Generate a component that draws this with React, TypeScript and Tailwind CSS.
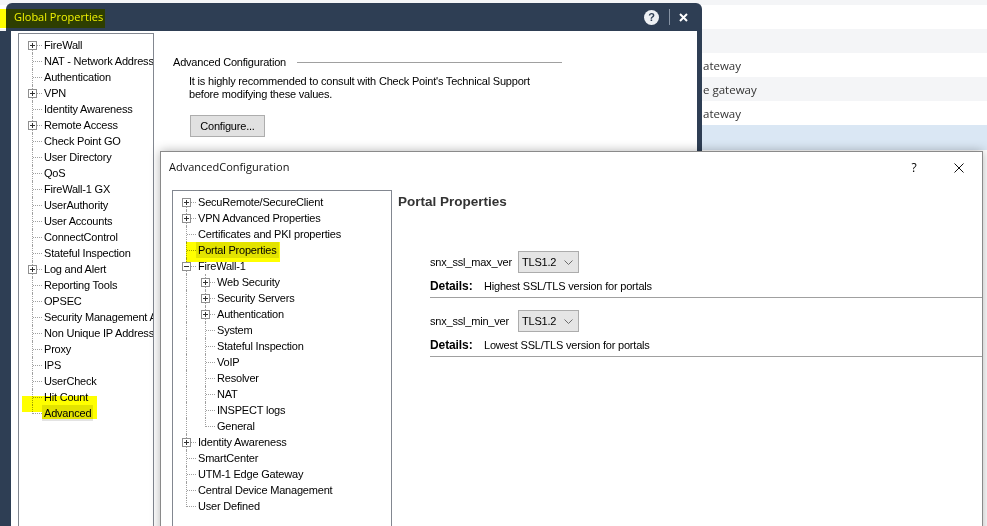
import React from "react";

type Row = {
  label: string;
  level: number;
  exp?: "plus" | "minus";
  first?: boolean;
  last?: boolean;
  selected?: boolean;
};

const globalTree: Row[] = [
  { label: "FireWall", level: 0, exp: "plus", first: true },
  { label: "NAT - Network Address Translation", level: 0 },
  { label: "Authentication", level: 0 },
  { label: "VPN", level: 0, exp: "plus" },
  { label: "Identity Awareness", level: 0 },
  { label: "Remote Access", level: 0, exp: "plus" },
  { label: "Check Point GO", level: 0 },
  { label: "User Directory", level: 0 },
  { label: "QoS", level: 0 },
  { label: "FireWall-1 GX", level: 0 },
  { label: "UserAuthority", level: 0 },
  { label: "User Accounts", level: 0 },
  { label: "ConnectControl", level: 0 },
  { label: "Stateful Inspection", level: 0 },
  { label: "Log and Alert", level: 0, exp: "plus" },
  { label: "Reporting Tools", level: 0 },
  { label: "OPSEC", level: 0 },
  { label: "Security Management Access", level: 0 },
  { label: "Non Unique IP Address Ranges", level: 0 },
  { label: "Proxy", level: 0 },
  { label: "IPS", level: 0 },
  { label: "UserCheck", level: 0 },
  { label: "Hit Count", level: 0 },
  { label: "Advanced", level: 0, last: true, selected: true },
];

const advTree: Row[] = [
  { label: "SecuRemote/SecureClient", level: 0, exp: "plus", first: true },
  { label: "VPN Advanced Properties", level: 0, exp: "plus" },
  { label: "Certificates and PKI properties", level: 0 },
  { label: "Portal Properties", level: 0, selected: true },
  { label: "FireWall-1", level: 0, exp: "minus" },
  { label: "Web Security", level: 1, exp: "plus" },
  { label: "Security Servers", level: 1, exp: "plus" },
  { label: "Authentication", level: 1, exp: "plus" },
  { label: "System", level: 1 },
  { label: "Stateful Inspection", level: 1 },
  { label: "VoIP", level: 1 },
  { label: "Resolver", level: 1 },
  { label: "NAT", level: 1 },
  { label: "INSPECT logs", level: 1 },
  { label: "General", level: 1, last: true },
  { label: "Identity Awareness", level: 0, exp: "plus" },
  { label: "SmartCenter", level: 0 },
  { label: "UTM-1 Edge Gateway", level: 0 },
  { label: "Central Device Management", level: 0 },
  { label: "User Defined", level: 0, last: true },
];

function Expander({ kind }: { kind: "plus" | "minus" }) {
  return (
    <svg
      className="absolute left-[9px] top-[4px]"
      width="9"
      height="9"
      viewBox="0 0 9 9"
      shapeRendering="crispEdges"
    >
      <rect x="0.5" y="0.5" width="8" height="8" fill="#fff" stroke="#8f8f8f" />
      <path d="M2 4.5h5" stroke="#333" />
      {kind === "plus" && <path d="M4.5 2v5" stroke="#333" />}
    </svg>
  );
}

function TreeRow({ row }: { row: Row }) {
  return (
    <div className="flex h-[16px] items-center overflow-hidden">
      {row.level === 1 && (
        <span className="relative h-full w-[19px] shrink-0">
          <span className="absolute left-[13px] top-0 bottom-0 border-l border-dotted border-[#a0a0a0]" />
        </span>
      )}
      <span className="relative h-full w-[23px] shrink-0">
        <span
          className={`absolute left-[13px] border-l border-dotted border-[#a0a0a0] ${
            row.first ? "top-[8px]" : "top-0"
          } ${row.last ? "h-[9px]" : "bottom-0"}`}
        />
        <span className="absolute left-[14px] right-0 top-[8px] border-t border-dotted border-[#a0a0a0]" />
        {row.exp && <Expander kind={row.exp} />}
      </span>
      <span
        className={`h-[16px] min-w-0 overflow-hidden whitespace-nowrap px-[2px] leading-[16px] ${
          row.selected ? "bg-[#e3e3e3]" : ""
        }`}
      >
        {row.label}
      </span>
    </div>
  );
}

function Select() {
  return (
    <div className="flex h-[22px] w-[61px] items-center justify-between border border-[#acacac] bg-[#e5e5e5] pl-[3px] pr-[5px]">
      <span>TLS1.2</span>
      <svg width="9" height="5" viewBox="0 0 9 5">
        <path d="M0.5 0.5l4 4 4-4" fill="none" stroke="#6b6b6b" />
      </svg>
    </div>
  );
}

function PropRow({ name, details }: { name: string; details: string }) {
  return (
    <>
      <div className="flex h-[22px] items-center">
        <span className="w-[88px]">{name}</span>
        <Select />
      </div>
      <div className="mt-[6px] flex h-[14px] items-center leading-[14px]">
        <span className="w-[54px] text-[12px] font-bold tracking-[-0.1px]">Details:</span>
        <span>{details}</span>
      </div>
      <div className="mt-[4px] h-px bg-[#a0a0a0]" />
    </>
  );
}

export default function App() {
  return (
    <div className="relative h-[526px] w-[987px] overflow-hidden bg-white font-['Liberation_Sans',Arial,sans-serif] text-[11px] tracking-[-0.2px] text-black">
      {/* background application list */}
      <div className="flex flex-col font-['Open_Sans',sans-serif] text-[11.5px] tracking-normal text-[#333]">
        <div className="h-[5px] bg-[#f4f5f7]" />
        <div className="h-[24px] bg-white" />
        <div className="h-[24px] bg-[#f4f5f7]" />
        <div className="flex h-[24px] items-center bg-white pl-[703px] pt-[2px]">ateway</div>
        <div className="flex h-[24px] items-center bg-[#f4f5f7] pl-[703px] pt-[2px]">e gateway</div>
        <div className="flex h-[24px] items-center bg-white pl-[703px] pt-[2px]">ateway</div>
        <div className="h-[25px] bg-[#dae7f4]" />
      </div>

      {/* Global Properties window */}
      <div className="absolute left-0 top-[3px] flex h-[523px] w-[702px] flex-col">
        <div className="ml-[6px] flex h-[28px] shrink-0 items-center rounded-t-[6px] bg-[#2e3e54] pl-[8px] pr-[14px]">
          <span className="font-['Open_Sans',sans-serif] text-[11px] tracking-normal text-[#f2f4f7]">
            Global Properties
          </span>
          <span className="ml-auto flex h-[15px] w-[15px] items-center justify-center rounded-full bg-[#eef1f5] text-[11px] font-bold tracking-normal text-[#2e3e54]">
            ?
          </span>
          <span className="ml-[10px] h-[16px] w-px bg-[#8592a3]" />
          <svg className="ml-[9px]" width="9" height="9" viewBox="0 0 9 9">
            <path d="M1 1l7 7M8 1l-7 7" stroke="#fff" strokeWidth="2" />
          </svg>
        </div>
        <div className="flex min-h-0 flex-1 bg-[#2e3e54] pl-[11px] pr-[5px]">
          <div className="flex flex-1 items-start bg-white">
            <div className="ml-[7px] mt-[2px] h-[520px] w-[136px] shrink-0 overflow-hidden border border-[#828790] pt-[3px]">
              {globalTree.map((r) => (
                <TreeRow key={r.label} row={r} />
              ))}
            </div>
            <div className="ml-[19px] mt-[24px] w-[389px]">
              <div className="flex h-[14px] items-center">
                <span>Advanced Configuration</span>
                <span className="ml-[11px] h-px flex-1 bg-[#a0a0a0]" />
              </div>
              <p className="ml-[16px] mt-[6px] leading-[13px]">
                It is highly recommended to consult with Check Point's Technical Support
                <br />
                before modifying these values.
              </p>
              <button
                type="button"
                className="ml-[17px] mt-[14px] h-[22px] w-[75px] border border-[#adadad] bg-[#e1e1e1]"
              >
                Configure...
              </button>
            </div>
          </div>
        </div>
      </div>

      {/* AdvancedConfiguration window */}
      <div className="absolute left-[160px] top-[151px] flex h-[400px] w-[823px] flex-col border border-[#8a8a8a] bg-white shadow-[0_0_10px_rgba(0,0,0,0.3)]">
        <div className="flex h-[31px] shrink-0 items-center pl-[8px]">
          <span className="font-['Open_Sans',sans-serif] text-[11px] tracking-normal text-[#111]">
            AdvancedConfiguration
          </span>
          <span className="ml-auto w-[12px] text-center font-['Open_Sans',sans-serif] text-[12px] tracking-normal">
            ?
          </span>
          <svg className="ml-[34px] mr-[18px]" width="10" height="10" viewBox="0 0 10 10">
            <path d="M0.5 0.5l9 9M9.5 0.5l-9 9" stroke="#111" strokeWidth="1" />
          </svg>
        </div>
        <div className="flex flex-1 items-start">
          <div className="ml-[11px] mt-[7px] h-[360px] w-[220px] shrink-0 overflow-hidden border border-[#828790] pt-[3px]">
            {advTree.map((r) => (
              <TreeRow key={r.label + r.level} row={r} />
            ))}
          </div>
          <div className="mt-[7px] flex-1 pl-[6px]">
            <div className="pt-[4px] text-[13.5px] font-bold leading-[16px] tracking-normal text-[#333]">
              Portal Properties
            </div>
            <div className="ml-[32px] mt-[41px]">
              <PropRow name="snx_ssl_max_ver" details="Highest SSL/TLS version for portals" />
              <div className="mt-[12px]" />
              <PropRow name="snx_ssl_min_ver" details="Lowest SSL/TLS version for portals" />
            </div>
          </div>
        </div>
      </div>

      {/* highlighter marks */}
      <div className="absolute left-0 top-[9px] h-[19px] w-[105px] bg-[#ffff00] mix-blend-multiply" />
      <div className="absolute left-[22px] top-[396px] h-[16px] w-[75px] bg-[#ffff00] mix-blend-multiply" />
      <div className="absolute left-[42px] top-[404px] h-[15px] w-[55px] bg-[#ffff00] mix-blend-multiply" />
      <div className="absolute left-[186px] top-[242px] h-[20px] w-[94px] bg-[#ffff00] mix-blend-multiply" />
    </div>
  );
}
